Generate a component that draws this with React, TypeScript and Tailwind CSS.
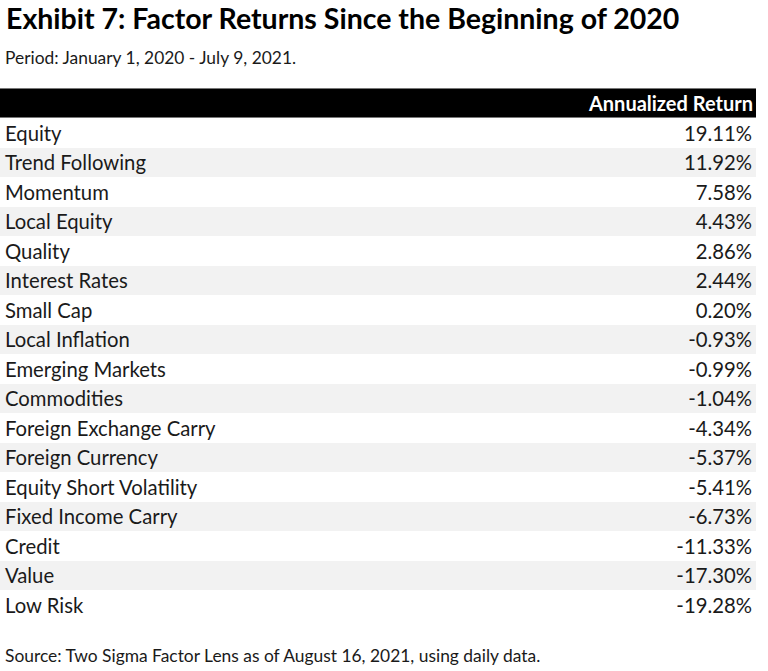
import React from "react";

const rows: [string, string][] = [
  ["Equity", "19.11%"],
  ["Trend Following", "11.92%"],
  ["Momentum", "7.58%"],
  ["Local Equity", "4.43%"],
  ["Quality", "2.86%"],
  ["Interest Rates", "2.44%"],
  ["Small Cap", "0.20%"],
  ["Local Inflation", "-0.93%"],
  ["Emerging Markets", "-0.99%"],
  ["Commodities", "-1.04%"],
  ["Foreign Exchange Carry", "-4.34%"],
  ["Foreign Currency", "-5.37%"],
  ["Equity Short Volatility", "-5.41%"],
  ["Fixed Income Carry", "-6.73%"],
  ["Credit", "-11.33%"],
  ["Value", "-17.30%"],
  ["Low Risk", "-19.28%"],
];

export default function App() {
  return (
    <div className="w-[768px] h-[671px] bg-white text-[#1a1a1a] font-['Lato',sans-serif]">
      <div className="pl-[6px] h-[40px] text-[28.5px] font-bold leading-[36px] text-black">
        Exhibit 7: Factor Returns Since the Beginning of 2020
      </div>
      <div className="pl-[5px] text-[17.4px] leading-[24px] h-[48px] pt-[6px]">
        Period: January 1, 2020 - July 9, 2021.
      </div>
      <div className="w-[756px]">
        <div className="h-[30px] bg-black border-y border-[#777] flex items-center justify-end pr-[3px] text-white font-bold text-[20px]">
          Annualized Return
        </div>
        {rows.map(([name, val], i) => (
          <div
            key={name}
            className={`h-[29.5px] flex items-center justify-between pl-[5px] pr-[4px] text-[20.3px] ${
              i % 2 === 1 ? "bg-[#f2f2f2]" : "bg-white"
            }`}
          >
            <span>{name}</span>
            <span>{val}</span>
          </div>
        ))}
      </div>
      <div className="pl-[5px] pt-[24.5px] text-[17.4px] leading-[24px]">
        Source: Two Sigma Factor Lens as of August 16, 2021, using daily data.
      </div>
    </div>
  );
}
